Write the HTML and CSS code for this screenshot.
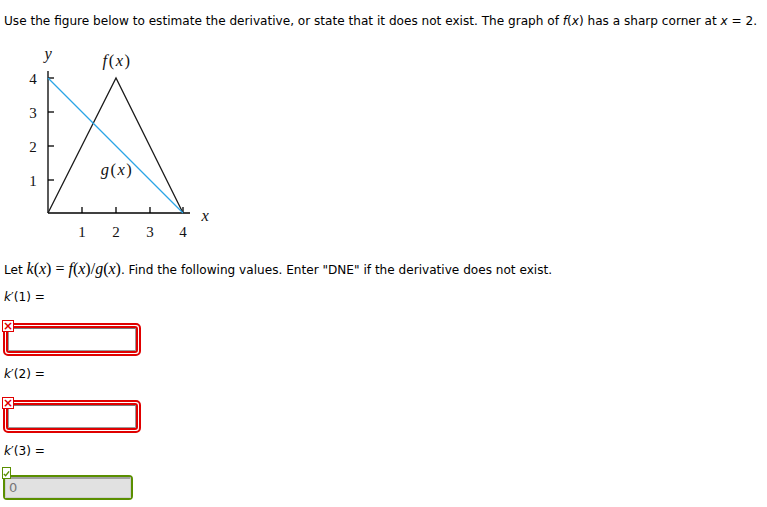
FILE: index.html
```html
<!DOCTYPE html>
<html>
<head>
<meta charset="utf-8">
<link rel="stylesheet" href="styles.css">
</head>
<body>
<div class="page">
  <p class="intro">Use the figure below to estimate the derivative, or state that it does not exist. The graph of <i>f</i>(<i>x</i>) has a sharp corner at <i>x</i> = 2.</p>
  <svg class="fig" width="240" height="210" viewBox="0 0 240 210">
    <g stroke="#000" stroke-width="1.3" fill="none">
      <line x1="48" y1="33" x2="48" y2="175"/>
      <line x1="48" y1="175" x2="190" y2="175"/>
      <line x1="48" y1="142" x2="54" y2="142"/>
      <line x1="48" y1="108" x2="54" y2="108"/>
      <line x1="48" y1="74" x2="54" y2="74"/>
      <line x1="48" y1="40" x2="54" y2="40"/>
      <line x1="82" y1="175" x2="82" y2="169"/>
      <line x1="116" y1="175" x2="116" y2="169"/>
      <line x1="150" y1="175" x2="150" y2="169"/>
      <line x1="183" y1="175" x2="183" y2="169"/>
      <polyline points="48,175 116,40 183,175" stroke="#1a1a1a"/>
    </g>
    <line x1="48" y1="40" x2="183" y2="175" stroke="#2ba5e6" stroke-width="1.3"/>
    <g class="num">
      <text x="33" y="46">4</text>
      <text x="33" y="80">3</text>
      <text x="33" y="114">2</text>
      <text x="33" y="148">1</text>
      <text x="82" y="199">1</text>
      <text x="116" y="199">2</text>
      <text x="150" y="199">3</text>
      <text x="183" y="199">4</text>
    </g>
    <g class="lbl">
      <text x="49" y="21"><tspan class="it">y</tspan></text>
      <text x="117" y="28"><tspan class="it">f</tspan>(<tspan class="it">x</tspan>)</text>
      <text x="117" y="137"><tspan class="it">g</tspan>(<tspan class="it">x</tspan>)</text>
      <text x="206" y="183"><tspan class="it">x</tspan></text>
    </g>
  </svg>
  <p class="let">Let <span class="math"><i>k</i>(<i>x</i>) = <i>f</i>(<i>x</i>)/<i>g</i>(<i>x</i>)</span>. Find the following values. Enter "DNE" if the derivative does not exist.</p>

  <p class="q"><i>k</i>′(1) =</p>
  <div class="field wrong">
    <span class="badge bad">×</span>
    <div class="inner"><div class="input"></div></div>
  </div>

  <p class="q"><i>k</i>′(2) =</p>
  <div class="field wrong">
    <span class="badge bad">×</span>
    <div class="inner"><div class="input"></div></div>
  </div>

  <p class="q"><i>k</i>′(3) =</p>
  <div class="field right">
    <span class="badge good"><svg width="8" height="7" viewBox="0 0 8 7"><polyline points="1,4 3,6 7,1" fill="none" stroke="#5a8f00" stroke-width="1.6"/></svg></span>
    <div class="input done">0</div>
  </div>
</div>
</body>
</html>
```

FILE: styles.css
```css
html, body {
  margin: 0;
  padding: 0;
  background: #fff;
}
.page {
  font-family: "DejaVu Sans", Verdana, sans-serif;
  font-size: 12.1px;
  color: #000;
  padding: 13px 0 0 4px;
}
p {
  margin: 0;
}
.intro {
  line-height: 16px;
}
.fig {
  display: block;
  margin: 9px 0 0 -4px;
}
.fig .num text, .fig .lbl text {
  font-family: "Liberation Serif", "DejaVu Serif", serif;
  font-size: 15px;
  text-anchor: middle;
  fill: #111;
}
.fig .lbl text {
  font-size: 16.5px;
  letter-spacing: 1.5px;
}
.fig .it {
  font-style: italic;
}
.let {
  margin-top: 12px;
  line-height: 18px;
}
.math {
  font-family: "Liberation Serif", serif;
  font-size: 16px;
}
.q {
  margin-top: 10px;
  line-height: 16px;
}
.field {
  position: relative;
  margin-left: -1px;
}
.field.wrong {
  width: 132px;
  border: 2px solid #e00000;
  border-radius: 5px;
  padding: 1px;
  margin-top: 18px;
  margin-bottom: 10px;
}
.field.wrong .inner {
  border: 2px solid #e00000;
  border-radius: 3px;
}
.field.wrong .input {
  height: 21px;
  border: 1px solid #9a9a9a;
  border-top-color: #7a7a7a;
  background: #fff;
}
.field.right {
  width: 126px;
  border: 2px solid #5a8f00;
  border-radius: 4px;
  margin-top: 16px;
}
.input.done {
  height: 18px;
  border: 1px solid #cfcfcf;
  border-top: 2px solid #a0a0a0;
  background: #e1e1e1;
  color: #777;
  font-size: 13px;
  line-height: 18px;
  padding-left: 3px;
  box-sizing: content-box;
}
.badge {
  position: absolute;
  left: -3px;
  box-sizing: border-box;
  background: #fff;
  display: flex;
  align-items: center;
  justify-content: center;
}
.badge.bad {
  top: -5px;
  width: 12px;
  height: 12px;
  border: 1px solid #e00000;
  color: #e00000;
  font-weight: bold;
  font-size: 12px;
  line-height: 10px;
}
.badge.good {
  top: -10px;
  width: 9px;
  height: 12px;
  border: 1px solid #5a8f00;
}
```
